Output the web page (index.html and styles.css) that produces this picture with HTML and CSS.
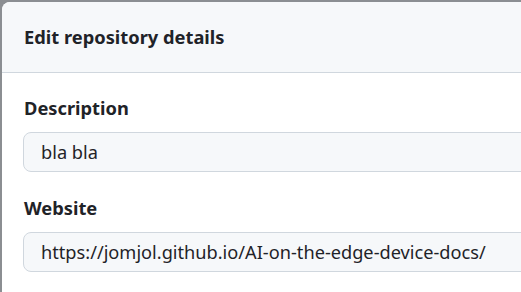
FILE: index.html
```html
<!DOCTYPE html>
<html>
<head>
<meta charset="utf-8">
<link rel="stylesheet" href="styles.css">
</head>
<body>
<div class="dialog">
  <div class="header">
    <h1 class="title">Edit repository details</h1>
  </div>
  <div class="body">
    <div class="field">
      <label class="label">Description</label>
      <div class="input">bla bla</div>
    </div>
    <div class="field">
      <label class="label">Website</label>
      <div class="input">https://jomjol.github.io/AI-on-the-edge-device-docs/</div>
    </div>
  </div>
</div>
</body>
</html>
```
FILE: styles.css
```css
html, body {
  margin: 0;
  padding: 0;
  background: #8b8e92;
  width: 521px;
  height: 292px;
  overflow: hidden;
}
body {
  padding: 2px 0 0 2px;
  box-sizing: border-box;
  font-family: "Noto Sans", "DejaVu Sans", sans-serif;
  color: #1f2328;
}
.dialog {
  background: #ffffff;
  border-top-left-radius: 8px;
  height: 300px;
  width: 560px;
  overflow: hidden;
}
.header {
  background: #f6f8fa;
  border-bottom: 1px solid #d0d7de;
  height: 71px;
  box-sizing: border-box;
  display: flex;
  align-items: center;
  padding-left: 22px;
}
.title {
  margin: 0;
  font-size: 18.3px;
  font-weight: 700;
  line-height: 18px;
}
.body {
  padding: 23px 0 0 21px;
  display: flex;
  flex-direction: column;
  gap: 24px;
}
.field {
  display: flex;
  flex-direction: column;
  gap: 12px;
}
.label {
  font-size: 18.3px;
  font-weight: 700;
  line-height: 24px;
  padding-left: 1px;
}
.input {
  height: 40px;
  box-sizing: border-box;
  border: 1px solid #d0d7de;
  border-radius: 8px;
  background: #f6f8fa;
  font-size: 18.2px;
  line-height: 38px;
  padding-left: 17px;
  white-space: nowrap;
}
```
